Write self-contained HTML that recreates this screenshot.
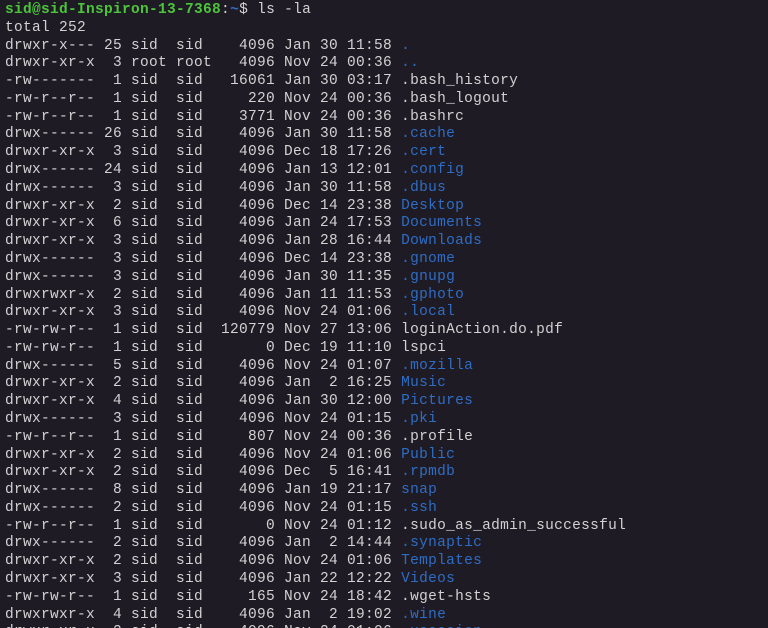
<!DOCTYPE html>
<html><head><style>
html,body{margin:0;padding:0;background:#1e1b25;width:768px;height:628px;overflow:hidden}
pre{margin:0;padding:2px 0 0 5px;font-family:"Liberation Mono",monospace;font-size:14.5px;letter-spacing:0.3px;line-height:17.78px;color:#d2d2d2}
.g{color:#4cc53a;font-weight:bold}.b{color:#2f6dc4;font-weight:bold}.d{color:#2f6dc4}
</style></head><body><pre><span class="g">sid@sid-Inspiron-13-7368</span>:<span class="b">~</span>$ ls -la
total 252
drwxr-x--- 25 sid  sid    4096 Jan 30 11:58 <span class="d">.</span>
drwxr-xr-x  3 root root   4096 Nov 24 00:36 <span class="d">..</span>
-rw-------  1 sid  sid   16061 Jan 30 03:17 .bash_history
-rw-r--r--  1 sid  sid     220 Nov 24 00:36 .bash_logout
-rw-r--r--  1 sid  sid    3771 Nov 24 00:36 .bashrc
drwx------ 26 sid  sid    4096 Jan 30 11:58 <span class="d">.cache</span>
drwxr-xr-x  3 sid  sid    4096 Dec 18 17:26 <span class="d">.cert</span>
drwx------ 24 sid  sid    4096 Jan 13 12:01 <span class="d">.config</span>
drwx------  3 sid  sid    4096 Jan 30 11:58 <span class="d">.dbus</span>
drwxr-xr-x  2 sid  sid    4096 Dec 14 23:38 <span class="d">Desktop</span>
drwxr-xr-x  6 sid  sid    4096 Jan 24 17:53 <span class="d">Documents</span>
drwxr-xr-x  3 sid  sid    4096 Jan 28 16:44 <span class="d">Downloads</span>
drwx------  3 sid  sid    4096 Dec 14 23:38 <span class="d">.gnome</span>
drwx------  3 sid  sid    4096 Jan 30 11:35 <span class="d">.gnupg</span>
drwxrwxr-x  2 sid  sid    4096 Jan 11 11:53 <span class="d">.gphoto</span>
drwxr-xr-x  3 sid  sid    4096 Nov 24 01:06 <span class="d">.local</span>
-rw-rw-r--  1 sid  sid  120779 Nov 27 13:06 loginAction.do.pdf
-rw-rw-r--  1 sid  sid       0 Dec 19 11:10 lspci
drwx------  5 sid  sid    4096 Nov 24 01:07 <span class="d">.mozilla</span>
drwxr-xr-x  2 sid  sid    4096 Jan  2 16:25 <span class="d">Music</span>
drwxr-xr-x  4 sid  sid    4096 Jan 30 12:00 <span class="d">Pictures</span>
drwx------  3 sid  sid    4096 Nov 24 01:15 <span class="d">.pki</span>
-rw-r--r--  1 sid  sid     807 Nov 24 00:36 .profile
drwxr-xr-x  2 sid  sid    4096 Nov 24 01:06 <span class="d">Public</span>
drwxr-xr-x  2 sid  sid    4096 Dec  5 16:41 <span class="d">.rpmdb</span>
drwx------  8 sid  sid    4096 Jan 19 21:17 <span class="d">snap</span>
drwx------  2 sid  sid    4096 Nov 24 01:15 <span class="d">.ssh</span>
-rw-r--r--  1 sid  sid       0 Nov 24 01:12 .sudo_as_admin_successful
drwx------  2 sid  sid    4096 Jan  2 14:44 <span class="d">.synaptic</span>
drwxr-xr-x  2 sid  sid    4096 Nov 24 01:06 <span class="d">Templates</span>
drwxr-xr-x  3 sid  sid    4096 Jan 22 12:22 <span class="d">Videos</span>
-rw-rw-r--  1 sid  sid     165 Nov 24 18:42 .wget-hsts
drwxrwxr-x  4 sid  sid    4096 Jan  2 19:02 <span class="d">.wine</span>
drwxr-xr-x  2 sid  sid    4096 Nov 24 01:06 <span class="d">.xsession</span>
</pre></body></html>
